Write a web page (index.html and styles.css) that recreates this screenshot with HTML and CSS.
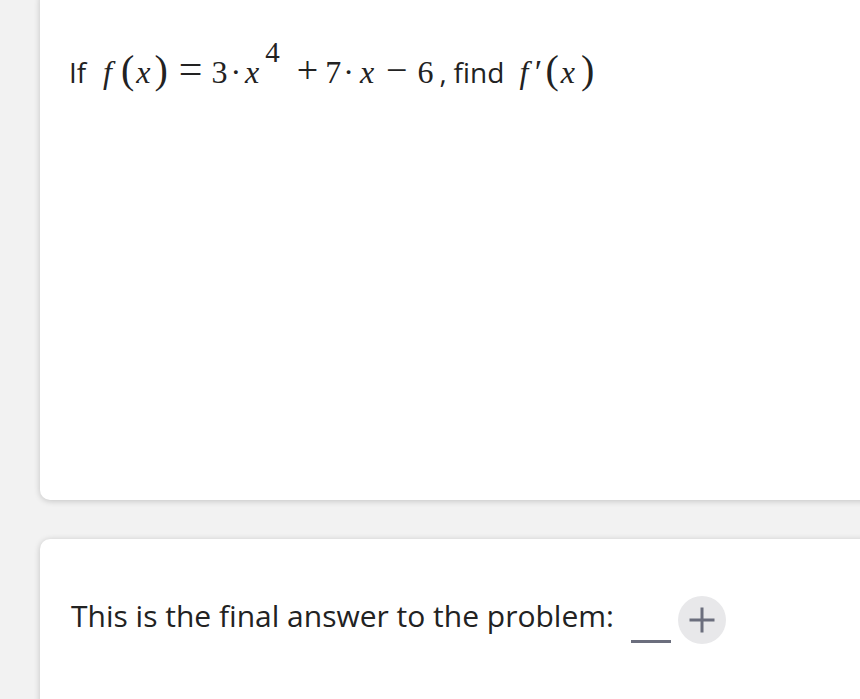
FILE: index.html
```html
<!DOCTYPE html>
<html>
<head>
<meta charset="utf-8">
<link rel="stylesheet" href="styles.css">
</head>
<body>
<div class="page">
  <div class="card card-top">
    <p class="question">
      <span class="txt t-if">If</span>
      <span class="mi g15">f</span>
      <span class="paren g9">(</span>
      <span class="mi g2">x</span>
      <span class="paren g4">)</span>
      <span class="op rel g11">=</span>
      <span class="mn g9">3</span>
      <span class="dot g3">·</span>
      <span class="mi g4">x</span>
      <span class="sup g6">4</span>
      <span class="op g17">+</span>
      <span class="mn g7">7</span>
      <span class="dot g2">·</span>
      <span class="mi g6">x</span>
      <span class="op g12">−</span>
      <span class="mn g10">6</span>
      <span class="txt t-comma g6">,</span>
      <span class="txt t-find g7">find</span>
      <span class="mi g14">f</span>
      <span class="prime g6">′</span>
      <span class="paren g3">(</span>
      <span class="mi g2">x</span>
      <span class="paren g6">)</span>
    </p>
  </div>
  <div class="card card-bottom">
    <div class="answer-row">
      <span class="answer-text">This is the final answer to the problem:</span>
      <span class="blank"></span>
      <button class="add-btn" aria-label="add">
        <svg width="26" height="26" viewBox="0 0 26 26"><path d="M13 0.5v25M0.5 13h25" stroke="#6b6e7d" stroke-width="3" fill="none"/></svg>
      </button>
    </div>
  </div>
</div>
</body>
</html>
```
FILE: styles.css
```css
html, body {
  margin: 0;
  padding: 0;
  background: #f2f2f2;
  overflow: hidden;
}
.page {
  width: 860px;
  height: 699px;
  display: flex;
  flex-direction: column;
  gap: 39px;
  padding-left: 40px;
  box-sizing: border-box;
  overflow: hidden;
}
.card {
  background: #fff;
  box-shadow: 0 1px 6px rgba(0,0,0,0.2);
  margin-right: -20px;
  border-radius: 10px;
  box-sizing: border-box;
  flex: none;
}
.card-top {
  height: 510px;
  margin-top: -10px;
  padding: 58px 0 0 29px;
}
.card-bottom {
  height: 200px;
  padding: 56px 0 0 31px;
}
.question {
  margin: 0;
  display: flex;
  align-items: baseline;
  line-height: 1;
  color: #222;
  font-family: "Liberation Serif", "Times New Roman", serif;
  font-size: 32px;
}
.question > span { flex: none; }
.txt {
  font-family: "Open Sans", sans-serif;
  font-size: 28px;
}
.t-if { width: 19px; }
.t-comma { width: 7px; display: flex; justify-content: center; }
.t-find { width: 52px; }
.mi { font-style: italic; }
.paren { font-size: 40px; }
.op { font-size: 38px; }
.op.rel { font-size: 42px; }
.sup {
  font-size: 29px;
  position: relative;
  top: -21px;
}
.prime {
  width: 8px;
  font-size: 34px;
  display: flex;
  justify-content: center;
}
.g2 { margin-left: 2px; }
.g3 { margin-left: 3px; }
.g4 { margin-left: 4px; }
.g6 { margin-left: 6px; }
.g7 { margin-left: 7px; }
.g9 { margin-left: 9px; }
.g10 { margin-left: 10px; }
.g11 { margin-left: 11px; }
.g12 { margin-left: 12px; }
.g14 { margin-left: 14px; }
.g15 { margin-left: 15px; }
.g17 { margin-left: 17px; }
.answer-row {
  display: flex;
  align-items: center;
  font-family: "Open Sans", sans-serif;
  font-size: 30px;
  color: #222;
}
.answer-text {
  margin-right: 17px;
  margin-bottom: 8px;
}
.blank {
  width: 40px;
  height: 3px;
  background: #6b6e7d;
  margin-top: 44px;
  margin-right: 7px;
}
.add-btn {
  width: 48px;
  height: 48px;
  border-radius: 50%;
  border: none;
  background: #e8e8ea;
  display: flex;
  align-items: center;
  justify-content: center;
  padding: 0;
}
```
